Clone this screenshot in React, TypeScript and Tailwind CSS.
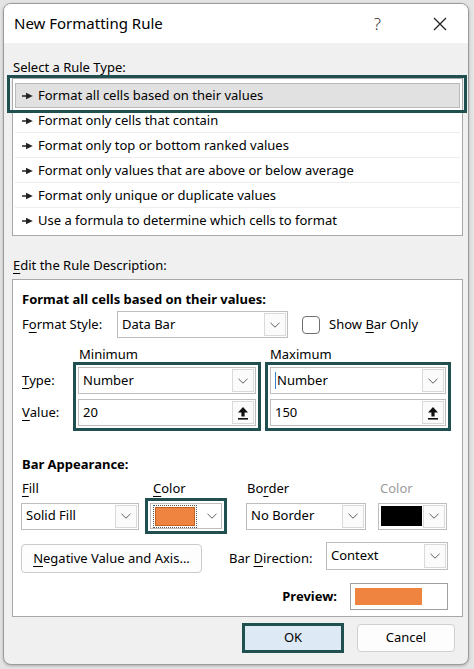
import React from "react";

const FONT = { fontFamily: '"Noto Sans", "Open Sans", sans-serif' };

const Chevron = ({ color = "#5f5f5f" }: { color?: string }) => (
  <svg width="10" height="6" viewBox="0 0 10 6">
    <path d="M0.5 0.8L5 5.2L9.5 0.8" fill="none" stroke={color} strokeWidth="1" />
  </svg>
);

const UpArrow = () => (
  <svg width="12" height="14" viewBox="0 0 12 14">
    <path d="M6 1L11 6.5H7.6V10.5H4.4V6.5H1Z" fill="#111" />
    <rect x="1" y="12" width="10" height="1.6" fill="#111" />
  </svg>
);

const RuleArrow = () => (
  <svg width="11" height="8" viewBox="0 0 11 8" className="shrink-0">
    <path d="M0 4H5" stroke="#222" strokeWidth="1.3" />
    <path d="M4 0.8L10.8 4L4 7.2Z" fill="#222" />
  </svg>
);

const U = ({ children }: { children: React.ReactNode }) => (
  <span className="underline underline-offset-[3px] decoration-[1px]">{children}</span>
);

const Dropdown = ({
  width,
  height = 27,
  children,
}: {
  width: string;
  height?: number;
  children: React.ReactNode;
}) => (
  <div
    className={`flex items-stretch border border-[#bdbdbd] bg-white ${width}`}
    style={{ height }}
  >
    <div className="flex min-w-0 flex-1 items-center pl-[4px] text-[13px]">{children}</div>
    <div className="m-[1px] flex w-[22px] items-center justify-center border border-[#dadada] bg-[#fbfbfb]">
      <Chevron />
    </div>
  </div>
);

const ValueInput = ({ value }: { value: string }) => (
  <div className="flex h-[27px] items-stretch border border-[#bdbdbd] bg-white">
    <div className="flex flex-1 items-center pl-[4px] text-[13px]">{value}</div>
    <div className="m-[1px] flex w-[22px] items-center justify-center border border-[#dadada] bg-[#fbfbfb]">
      <UpArrow />
    </div>
  </div>
);

const rules = [
  "Format only cells that contain",
  "Format only top or bottom ranked values",
  "Format only values that are above or below average",
  "Format only unique or duplicate values",
  "Use a formula to determine which cells to format",
];

export default function App() {
  return (
    <div className="h-[669px] w-[474px] overflow-hidden bg-[#e4e4e4] pl-[3px] pt-[3px] text-[13px] text-black" style={FONT}>
      <div className="flex h-[662px] w-[466px] flex-col overflow-hidden rounded-[8px] border border-[#9c9c9c] bg-[#f0f0f0] shadow-[0_1px_3px_rgba(0,0,0,0.25)]">
        {/* title bar */}
        <div className="flex h-[39px] shrink-0 items-center bg-white pl-[10px]">
          <span className="text-[15px] leading-none">New Formatting Rule</span>
          <span className="ml-auto mr-[52px] text-[17px] font-light text-[#333]">?</span>
          <svg width="14" height="14" viewBox="0 0 14 14" className="mr-[21px]">
            <path d="M1 1L13 13M13 1L1 13" stroke="#222" strokeWidth="1.3" />
          </svg>
        </div>

        <div className="flex flex-col pl-[8px] pr-[6px]">
          <div className="mt-[14px] h-[21px] pl-[1px] leading-[21px]">
            <U>S</U>elect a Rule Type:
          </div>

          {/* rule list */}
          <div className="relative h-[158px] w-[451px] border border-[#a8a8a8] bg-white p-[2px] pt-[4px]">
            <div className="flex h-[25px] items-center gap-[5px] border border-[#b9b9b9] bg-[#e1e1e1] pl-[6px] pt-[1px]">
              <RuleArrow />
              <span>Format all cells based on their values</span>
            </div>
            {rules.map((r, i) => (
              <div
                key={r}
                className={`flex h-[25px] items-center gap-[5px] pl-[7px] pt-[1px] ${
                  i < rules.length - 1 ? "border-b border-[#ededed]" : ""
                }`}
              >
                <RuleArrow />
                <span>{r}</span>
              </div>
            ))}
            <div className="pointer-events-none absolute left-[-6px] top-[-4px] h-[38px] w-[460px] border-[3px] border-[#1f4f4f]" />
          </div>

          <div className="mt-[19px] h-[21px] pl-[1px] leading-[21px]">
            <U>E</U>dit the Rule Description:
          </div>

          {/* description box */}
          <div className="mt-[3px] flex h-[338px] w-[451px] flex-col border border-[#a8a8a8] bg-white pl-[9px]">
            <div className="mt-[9px] h-[20px] font-bold leading-[20px]">
              Format all cells based on their values:
            </div>

            <div className="mt-[2px] flex h-[27px] items-center">
              <span className="w-[95px]">
                F<U>o</U>rmat Style:
              </span>
              <Dropdown width="w-[171px]">Data Bar</Dropdown>
              <div className="ml-[14px] h-[18px] w-[18px] rounded-[4px] border border-[#6f6f6f] bg-white" />
              <span className="ml-[9px]">
                Show <U>B</U>ar Only
              </span>
            </div>

            {/* min / max */}
            <div className="mt-[8px] flex h-[16px] items-center leading-[16px]">
              <span className="ml-[57px] w-[191px]">Minimum</span>
              <span>Maximum</span>
            </div>
            <div className="flex">
              <div className="flex w-[51px] flex-col pt-[5px]">
                <div className="flex h-[27px] items-center">
                  <U>T</U>ype:
                </div>
                <div className="mt-[5px] flex h-[27px] items-center">
                  <U>V</U>alue:
                </div>
              </div>
              <div className="flex w-[188px] flex-col gap-[5px] border-[3px] border-[#1f4f4f] p-[2px]">
                <Dropdown width="w-full">Number</Dropdown>
                <ValueInput value="20" />
              </div>
              <div className="ml-[4px] flex w-[186px] flex-col gap-[5px] border-[3px] border-[#1f4f4f] p-[2px]">
                <Dropdown width="w-full">
                  <span className="mr-[1px] h-[17px] w-[1px] bg-[#3b82c4]" />
                  Number
                </Dropdown>
                <ValueInput value="150" />
              </div>
            </div>

            {/* bar appearance */}
            <div className="mt-[23px] h-[20px] font-bold leading-[20px]">Bar Appearance:</div>
            <div className="mt-[5px] flex h-[19px] items-center">
              <span className="w-[131px]">
                <U>F</U>ill
              </span>
              <span className="w-[94px]">
                <U>C</U>olor
              </span>
              <span className="w-[133px]">
                Bo<U>r</U>der
              </span>
              <span className="text-[#9b9b9b]">Color</span>
            </div>
            <div className="flex h-[36px] items-center">
              <div className="-ml-[1px]">
                <Dropdown width="w-[118px]">Solid Fill</Dropdown>
              </div>
              <div className="ml-[6px] h-[36px] w-[82px] border-[3px] border-[#1f4f4f] p-[2px]">
                <div className="flex h-full items-center border border-[#bdbdbd] bg-white pl-[2px]">
                  <div className="border border-dotted border-[#555] p-[1px]">
                    <div className="h-[19px] w-[40px] border border-[#c06020] bg-[#ee8440]" />
                  </div>
                  <div className="ml-[6px] flex w-[20px] justify-center">
                    <Chevron />
                  </div>
                </div>
              </div>
              <div className="ml-[19px]">
                <Dropdown width="w-[120px]">No Border</Dropdown>
              </div>
              <div className="ml-[12px] flex h-[27px] w-[69px] items-stretch border border-[#bdbdbd] bg-white">
                <div className="flex flex-1 items-center pl-[2px]">
                  <div className="h-[20px] w-[41px] bg-black" />
                </div>
                <div className="m-[1px] flex w-[22px] items-center justify-center border border-[#dadada] bg-[#fbfbfb]">
                  <Chevron />
                </div>
              </div>
            </div>

            <div className="mt-[8px] flex h-[31px] items-start">
              <div className="-ml-[1px] mt-[2px] flex h-[29px] w-[181px] items-center justify-center rounded-[4px] border border-[#cbcbcb] bg-[#fdfdfd]">
                <U>N</U>egative Value and Axis...
              </div>
              <span className="ml-[27px] mt-[7px]">
                Bar <U>D</U>irection:
              </span>
              <div className="ml-auto mr-[14px]">
                <Dropdown width="w-[122px]" height={28}>
                  Context
                </Dropdown>
              </div>
            </div>

            <div className="mt-[10px] flex h-[27px] items-center justify-end pr-[14px]">
              <span className="mr-[13px] font-bold">Preview:</span>
              <div className="flex h-[27px] w-[98px] items-center border border-[#a0a0a0] bg-white pl-[4px]">
                <div className="h-[17px] w-[67px] bg-[#ee8440]" />
              </div>
            </div>
          </div>

          {/* footer */}
          <div className="mt-[6px] flex items-start">
            <div className="ml-[230px] flex h-[30px] w-[102px] items-center justify-center border-[3px] border-[#1f4f4f] bg-[#dde9f5]">
              OK
            </div>
            <div className="ml-[13px] mt-[1px] flex h-[28px] w-[98px] items-center justify-center rounded-[4px] border border-[#d0d0d0] bg-[#fdfdfd]">
              Cancel
            </div>
          </div>
        </div>
      </div>
    </div>
  );
}
